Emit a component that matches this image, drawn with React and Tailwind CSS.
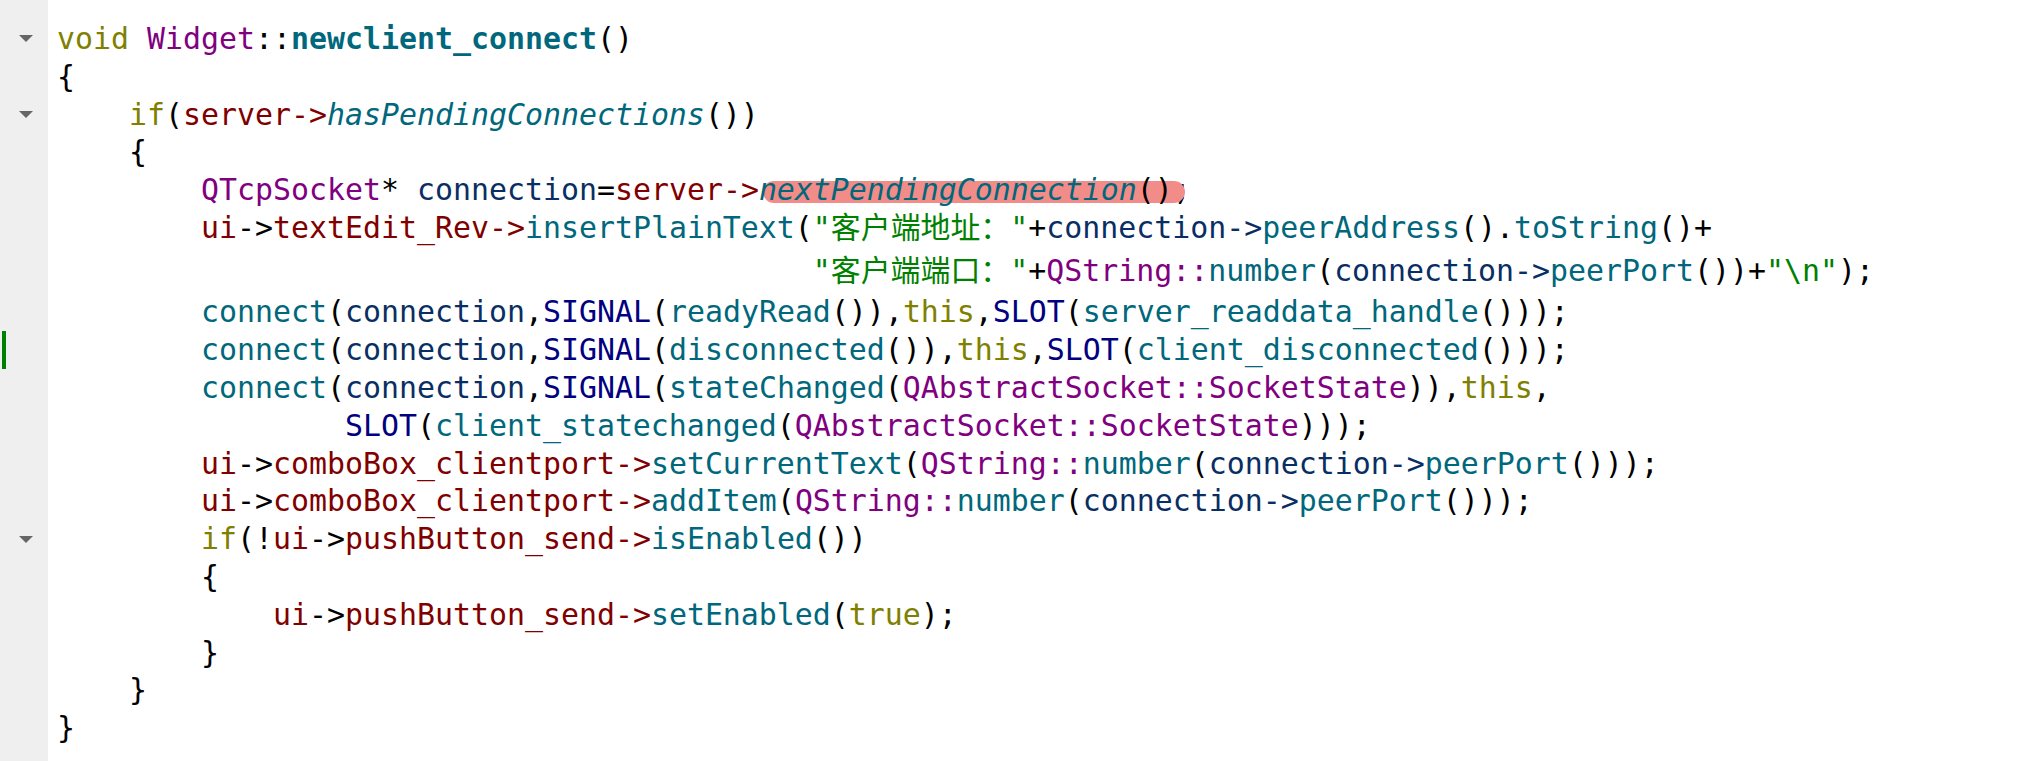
import React from "react";

const K = "text-[#808000]";
const T = "text-[#800080]";
const F = "text-[#800000]";
const L = "text-[#092e64]";
const FN = "text-[#00677c]";
const M = "text-[#000080]";
const S = "text-[#008000]";
const P = "text-black";

const t = (s, c = P, extra = "") => ({ s, c, extra });

const lines = [
  { h: "h-[37.8px]", fold: true, toks: [t("void", K), t(" "), t("Widget", T), t("::"), t("newclient_connect", FN, "font-bold"), t("()")] },
  { h: "h-[37.8px]", toks: [t("{")] },
  { h: "h-[37.8px]", fold: true, toks: [t("    "), t("if", K), t("("), t("server->", F), t("hasPendingConnections", FN, "italic"), t("())")] },
  { h: "h-[37.8px]", toks: [t("    {")] },
  {
    h: "h-[37.8px]",
    toks: [
      t("        "), t("QTcpSocket", T), t("*"), t(" "), t("connection", L), t("="), t("server->", F),
      { hl: true },
      t(";"),
    ],
  },
  {
    h: "h-[42.7px]",
    toks: [
      t("        "), t("ui", F), t("->"), t("textEdit_Rev->", F), t("insertPlainText", FN), t("("),
      t("\"客户端地址：\"", S), t("+"), t("connection->", L), t("peerAddress", FN), t("()."), t("toString", FN), t("()+"),
    ],
  },
  {
    h: "h-[41.7px]",
    toks: [
      t("                                          "), t("\"客户端端口：\"", S), t("+"), t("QString::", T), t("number", FN), t("("),
      t("connection->", L), t("peerPort", FN), t("())+"), t("\"\\n\"", S), t(");"),
    ],
  },
  {
    h: "h-[37.8px]",
    toks: [
      t("        "), t("connect", FN), t("("), t("connection", L), t(","), t("SIGNAL", M), t("("), t("readyRead", FN), t("())"),
      t(","), t("this", K), t(","), t("SLOT", M), t("("), t("server_readdata_handle", FN), t("()));"),
    ],
  },
  {
    h: "h-[37.8px]",
    bar: true,
    toks: [
      t("        "), t("connect", FN), t("("), t("connection", L), t(","), t("SIGNAL", M), t("("), t("disconnected", FN), t("())"),
      t(","), t("this", K), t(","), t("SLOT", M), t("("), t("client_disconnected", FN), t("()));"),
    ],
  },
  {
    h: "h-[37.8px]",
    toks: [
      t("        "), t("connect", FN), t("("), t("connection", L), t(","), t("SIGNAL", M), t("("), t("stateChanged", FN), t("("),
      t("QAbstractSocket::SocketState", T), t("))"), t(","), t("this", K), t(","),
    ],
  },
  {
    h: "h-[37.8px]",
    toks: [
      t("                "), t("SLOT", M), t("("), t("client_statechanged", FN), t("("), t("QAbstractSocket::SocketState", T), t(")));"),
    ],
  },
  {
    h: "h-[37.8px]",
    toks: [
      t("        "), t("ui", F), t("->"), t("comboBox_clientport->", F), t("setCurrentText", FN), t("("), t("QString::", T),
      t("number", FN), t("("), t("connection->", L), t("peerPort", FN), t("()));"),
    ],
  },
  {
    h: "h-[37.8px]",
    toks: [
      t("        "), t("ui", F), t("->"), t("comboBox_clientport->", F), t("addItem", FN), t("("), t("QString::", T),
      t("number", FN), t("("), t("connection->", L), t("peerPort", FN), t("()));"),
    ],
  },
  {
    h: "h-[37.8px]",
    fold: true,
    toks: [t("        "), t("if", K), t("(!"), t("ui", F), t("->"), t("pushButton_send->", F), t("isEnabled", FN), t("())")],
  },
  { h: "h-[37.8px]", toks: [t("        {")] },
  {
    h: "h-[37.8px]",
    toks: [t("            "), t("ui", F), t("->"), t("pushButton_send->", F), t("setEnabled", FN), t("("), t("true", K), t(");")],
  },
  { h: "h-[37.8px]", toks: [t("        }")] },
  { h: "h-[37.8px]", toks: [t("    }")] },
  { h: "h-[37.8px]", toks: [t("}")] },
];

function Fold() {
  return (
    <svg width="14" height="7" viewBox="0 0 14 7" className="block">
      <path d="M0 0 L14 0 L7 7 Z" fill="#666666" />
    </svg>
  );
}

export default function App() {
  return (
    <div
      className="w-[2043px] h-[761px] bg-white flex overflow-hidden"
      style={{ fontFamily: "'DejaVu Sans Mono', 'Noto Sans CJK SC', monospace" }}
    >
      <div className="w-[48px] shrink-0 h-full bg-[#efefef] pt-[20px] flex flex-col">
        {lines.map((ln, i) => (
          <div key={i} className={`${ln.h} shrink-0 relative flex items-center`}>
            {ln.bar && <div className="absolute left-[2px] top-0 bottom-0 w-[4px] bg-[#008000]" />}
            {ln.fold && (
              <div className="ml-[19px]">
                <Fold />
              </div>
            )}
          </div>
        ))}
      </div>
      <div className="flex-1 pt-[20px] pl-[9px] flex flex-col text-[29.9px] leading-[37.8px]">
        {lines.map((ln, i) => (
          <div key={i} className={`${ln.h} shrink-0 whitespace-pre`}>
            {ln.toks.map((tk, j) =>
              tk.hl ? (
                <span key={j} className="relative">
                  <span className="absolute left-[4px] -right-[12px] top-[9px] h-[22px] rounded-full bg-[#f28c88]" />
                  <span className={`relative italic ${FN}`}>nextPendingConnection</span>
                  <span className="relative text-black">()</span>
                </span>
              ) : (
                <span key={j} className={`${tk.c} ${tk.extra}`}>
                  {tk.s}
                </span>
              )
            )}
          </div>
        ))}
      </div>
    </div>
  );
}
